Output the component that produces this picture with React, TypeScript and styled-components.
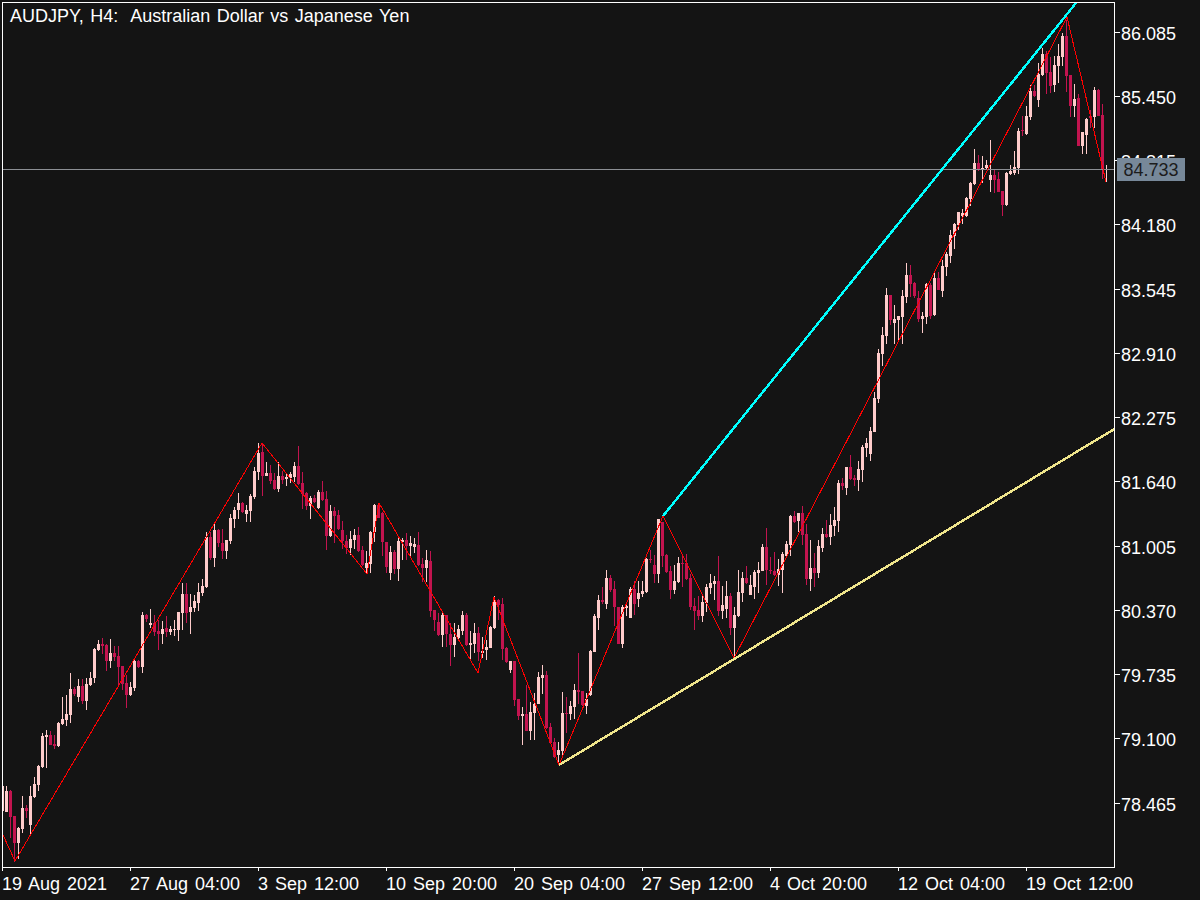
import styled, { createGlobalStyle } from 'styled-components';

// [bull, wick high, body top, body bottom, wick low], one candle every 4px starting at x=2
type Candle = [0 | 1, number, number, number, number];

const CANDLES: Candle[] = [
  [1, 786, 786, 811, 812], [1, 786, 791, 812, 812], [0, 790, 791, 817, 838], [0, 816, 816, 843, 862],
  [1, 827, 828, 843, 859], [1, 796, 808, 829, 833], [0, 805, 808, 811, 818], [1, 786, 796, 825, 835],
  [1, 777, 784, 797, 798], [1, 765, 766, 785, 791], [1, 733, 736, 767, 768], [1, 730, 735, 737, 768],
  [0, 731, 735, 745, 745], [0, 735, 744, 746, 749], [1, 722, 723, 746, 747], [1, 697, 719, 724, 725],
  [1, 695, 714, 720, 726], [1, 673, 689, 715, 723], [0, 687, 689, 694, 696], [1, 679, 686, 697, 702],
  [0, 679, 686, 701, 704], [1, 678, 684, 701, 710], [1, 672, 678, 685, 686], [1, 648, 649, 678, 683],
  [1, 640, 644, 650, 651], [0, 638, 644, 646, 654], [0, 644, 645, 661, 671], [1, 639, 653, 661, 668],
  [0, 646, 653, 657, 661], [0, 646, 656, 667, 685], [0, 666, 666, 684, 690], [0, 675, 683, 695, 708],
  [1, 682, 687, 695, 696], [1, 660, 661, 688, 691], [0, 660, 661, 667, 668], [1, 612, 615, 667, 673],
  [0, 614, 615, 619, 622], [1, 609, 623, 625, 628], [0, 615, 623, 632, 636], [0, 620, 631, 634, 650],
  [1, 621, 629, 634, 644], [0, 616, 628, 632, 637], [1, 626, 629, 632, 635], [1, 620, 629, 630, 636],
  [1, 612, 612, 630, 641], [1, 583, 594, 613, 630], [0, 583, 594, 613, 623], [1, 594, 607, 612, 634],
  [1, 595, 601, 608, 612], [1, 583, 592, 603, 611], [1, 579, 586, 593, 596], [1, 532, 537, 587, 588],
  [0, 532, 537, 558, 560], [1, 523, 530, 558, 567], [0, 529, 530, 543, 547], [0, 529, 543, 551, 559],
  [1, 540, 540, 551, 559], [1, 514, 518, 541, 544], [1, 507, 510, 519, 528], [1, 493, 503, 510, 519],
  [0, 502, 503, 512, 513], [1, 505, 510, 514, 522], [1, 494, 496, 511, 522], [1, 467, 471, 497, 499],
  [1, 443, 453, 472, 480], [0, 444, 452, 476, 496], [1, 462, 473, 476, 476], [0, 465, 473, 481, 484],
  [0, 473, 480, 489, 490], [1, 462, 476, 489, 492], [0, 471, 476, 480, 484], [1, 473, 477, 479, 486],
  [1, 472, 474, 478, 483], [1, 462, 466, 477, 482], [0, 446, 466, 484, 485], [0, 472, 483, 494, 509],
  [0, 492, 493, 506, 510], [1, 496, 498, 506, 519], [0, 495, 498, 502, 503], [1, 490, 492, 508, 509],
  [0, 481, 492, 500, 501], [0, 491, 499, 536, 550], [1, 505, 511, 536, 537], [0, 507, 511, 516, 543],
  [0, 510, 515, 529, 530], [0, 521, 530, 541, 549], [0, 535, 541, 548, 554], [1, 531, 539, 548, 555],
  [1, 529, 535, 540, 549], [0, 527, 535, 551, 552], [0, 546, 550, 565, 566], [1, 551, 563, 568, 573],
  [1, 531, 532, 564, 573], [1, 504, 505, 532, 542], [0, 504, 505, 518, 518], [0, 512, 513, 542, 556],
  [0, 542, 542, 567, 573], [1, 546, 552, 573, 580], [0, 550, 552, 569, 574], [1, 538, 541, 569, 581],
  [1, 538, 540, 542, 560], [0, 533, 540, 546, 560], [1, 536, 543, 546, 557], [1, 538, 544, 547, 553],
  [0, 532, 545, 565, 566], [0, 558, 564, 568, 582], [1, 550, 560, 568, 582], [0, 551, 561, 611, 617],
  [0, 610, 610, 620, 631], [0, 613, 622, 635, 636], [1, 613, 615, 635, 647], [0, 615, 615, 634, 647],
  [0, 623, 634, 645, 666], [1, 623, 637, 645, 657], [1, 625, 629, 638, 639], [1, 611, 615, 631, 635],
  [0, 613, 615, 645, 646], [1, 631, 643, 645, 659], [1, 623, 633, 644, 653], [0, 627, 633, 652, 661],
  [1, 637, 651, 653, 658], [1, 640, 647, 650, 660], [1, 626, 627, 648, 648], [1, 596, 600, 628, 629],
  [0, 599, 600, 605, 620], [0, 598, 604, 649, 660], [0, 647, 648, 662, 663], [1, 661, 661, 670, 673],
  [0, 661, 661, 700, 706], [0, 699, 699, 716, 720], [1, 707, 714, 716, 745], [0, 685, 714, 731, 731],
  [1, 702, 712, 731, 740], [1, 693, 704, 713, 740], [1, 672, 677, 704, 704], [1, 665, 675, 678, 694],
  [0, 671, 675, 728, 729], [0, 723, 727, 743, 744], [0, 738, 742, 757, 758], [1, 742, 750, 755, 765],
  [1, 692, 713, 751, 755], [0, 697, 713, 714, 733], [1, 701, 706, 714, 720], [1, 684, 690, 707, 719],
  [0, 653, 690, 692, 704], [0, 691, 691, 705, 706], [1, 693, 699, 706, 714], [1, 650, 651, 695, 696],
  [1, 614, 616, 652, 652], [1, 595, 600, 618, 630], [0, 587, 600, 602, 604], [1, 570, 578, 604, 609],
  [0, 575, 578, 590, 592], [0, 581, 589, 607, 626], [0, 607, 607, 644, 644], [1, 605, 607, 644, 648],
  [1, 603, 606, 608, 616], [1, 587, 589, 618, 618], [0, 581, 589, 604, 615], [1, 581, 593, 599, 607],
  [1, 581, 591, 594, 597], [1, 558, 559, 592, 593], [0, 550, 559, 560, 563], [0, 555, 565, 574, 583],
  [1, 519, 519, 574, 583], [0, 522, 522, 556, 567], [0, 554, 555, 572, 573], [0, 566, 571, 590, 599],
  [1, 565, 581, 590, 594], [1, 557, 563, 582, 583], [0, 555, 563, 564, 587], [0, 554, 563, 579, 580],
  [0, 574, 578, 607, 610], [0, 598, 606, 611, 630], [0, 596, 610, 616, 620], [1, 596, 602, 616, 622],
  [1, 584, 587, 603, 612], [1, 574, 583, 588, 594], [1, 576, 581, 584, 600], [0, 556, 581, 611, 616],
  [1, 586, 605, 611, 619], [1, 581, 596, 609, 618], [0, 593, 596, 628, 635], [1, 607, 615, 628, 658],
  [1, 570, 592, 616, 617], [1, 572, 578, 593, 602], [0, 566, 578, 583, 584], [1, 575, 585, 595, 595],
  [1, 570, 572, 587, 599], [1, 562, 570, 573, 593], [1, 544, 547, 571, 571], [0, 528, 547, 570, 585],
  [0, 557, 570, 571, 574], [0, 552, 571, 575, 576], [1, 559, 569, 575, 586], [1, 552, 554, 570, 593],
  [1, 541, 544, 556, 556], [1, 515, 516, 545, 556], [0, 511, 516, 522, 523], [1, 513, 513, 521, 532],
  [0, 506, 513, 535, 545], [0, 524, 534, 579, 585], [1, 540, 568, 579, 591], [0, 553, 568, 573, 587],
  [1, 540, 546, 573, 578], [1, 528, 534, 548, 552], [0, 520, 534, 537, 538], [1, 514, 525, 537, 545],
  [1, 507, 520, 526, 536], [1, 480, 483, 521, 532], [0, 478, 483, 486, 490], [1, 467, 467, 488, 495],
  [0, 455, 467, 479, 480], [0, 475, 478, 480, 486], [1, 461, 469, 480, 491], [1, 445, 447, 470, 482],
  [1, 438, 443, 448, 457], [1, 427, 431, 454, 461], [1, 392, 398, 432, 432], [1, 349, 353, 399, 403],
  [1, 327, 335, 354, 366], [1, 288, 295, 336, 344], [0, 295, 295, 320, 325], [1, 305, 319, 323, 344],
  [1, 316, 316, 320, 340], [1, 290, 296, 317, 344], [1, 263, 275, 297, 303], [0, 265, 275, 284, 297],
  [0, 282, 283, 296, 298], [0, 291, 298, 319, 322], [1, 312, 316, 319, 333], [1, 283, 284, 317, 324],
  [0, 283, 285, 316, 319], [1, 273, 278, 315, 316], [0, 272, 278, 290, 290], [1, 260, 266, 291, 297],
  [1, 252, 254, 267, 276], [1, 230, 235, 256, 263], [1, 223, 224, 236, 249], [1, 212, 212, 225, 230],
  [1, 209, 213, 216, 224], [1, 197, 198, 216, 217], [1, 182, 183, 199, 206], [1, 149, 163, 184, 185],
  [0, 155, 163, 170, 171], [1, 156, 168, 169, 183], [1, 160, 165, 168, 169], [1, 140, 175, 180, 192],
  [0, 169, 175, 180, 193], [0, 172, 179, 192, 192], [0, 191, 191, 205, 216], [1, 172, 173, 205, 206],
  [1, 165, 171, 174, 175], [1, 151, 167, 173, 175], [1, 128, 131, 168, 174], [0, 116, 130, 131, 136],
  [1, 106, 116, 134, 135], [1, 85, 91, 117, 120], [0, 85, 91, 96, 97], [1, 63, 74, 100, 107],
  [1, 48, 54, 75, 76], [0, 51, 54, 73, 94], [0, 57, 72, 86, 93], [1, 56, 65, 85, 92],
  [1, 44, 56, 66, 83], [1, 33, 36, 57, 66], [0, 20, 36, 76, 92], [0, 75, 75, 106, 117],
  [1, 84, 99, 106, 117], [0, 94, 98, 146, 146], [1, 132, 132, 146, 154], [1, 118, 119, 135, 154],
  [0, 110, 116, 118, 128], [1, 87, 90, 117, 128], [0, 89, 90, 116, 116], [0, 104, 115, 170, 179],
  [1, 165, 169, 170, 182],
];

const ZIGZAG = '3,835 15,861 262,443 367,574 379,503 478,673 494,597 559,765 663,516 734,658 1067,17 1106,182';
const PRICES = ['86.085', '85.450', '84.815', '84.180', '83.545', '82.910', '82.275', '81.640', '81.005', '80.370', '79.735', '79.100', '78.465'];
const TIMES = ['19 Aug 2021', '27 Aug 04:00', '3 Sep 12:00', '10 Sep 20:00', '20 Sep 04:00', '27 Sep 12:00', '4 Oct 20:00', '12 Oct 04:00', '19 Oct 12:00'];

const GlobalStyle = createGlobalStyle`
  html, body {
    margin: 0;
    background: #141414;
    overflow: hidden;
  }
`;

const Terminal = styled.div`
  width: 1200px;
  height: 900px;
  display: grid;
  grid-template-columns: 1115px 85px;
  grid-template-rows: 868px 32px;
  background: #141414;
  color: #fff;
  font-family: 'Liberation Sans', Arial, sans-serif;
  font-size: 18px;
`;

const ChartCell = styled.div`
  padding: 2px 0 0 2px;
`;

const ChartFrame = styled.div`
  position: relative;
  width: 1111px;
  height: 864px;
  border: 1px solid #fff;
  overflow: hidden;
`;

const Title = styled.div`
  position: absolute;
  top: 2px;
  left: 7px;
  line-height: 22px;
  white-space: pre;
  word-spacing: 1.5px;
`;

const Plot = styled.svg`
  display: block;
  width: 1111px;
  height: 864px;
`;

const Wick = styled.rect<{ $bull: boolean }>`
  fill: ${(p) => (p.$bull ? '#ffcccb' : '#c2144f')};
`;

const Body = styled.rect<{ $bull: boolean }>`
  fill: ${(p) => (p.$bull ? '#ffcccb' : '#c2144f')};
`;

const ZigZag = styled.polyline`
  fill: none;
  stroke: #ff0000;
  stroke-width: 1;
`;

const ChannelLine = styled.line<{ $color: string }>`
  stroke: ${(p) => p.$color};
  stroke-width: 2.4;
`;

const PriceLine = styled.line`
  stroke: #8c8f94;
  stroke-width: 1;
`;

const PriceAxis = styled.div`
  position: relative;
  padding-top: 2px;
`;

const PriceRow = styled.div`
  height: 64.25px;
  display: flex;
  align-items: center;
  gap: 1px;

  &::before {
    content: '';
    width: 5px;
    height: 1px;
    margin-top: -4px;
    background: #fff;
  }
`;

const PriceTag = styled.div`
  position: absolute;
  top: 158px;
  left: 2px;
  width: 68px;
  height: 23px;
  padding-top: 1px;
  box-sizing: border-box;
  display: flex;
  align-items: center;
  justify-content: center;
  background: #778899;
  color: #1c1c1c;
`;

const TimeAxis = styled.div`
  grid-column: 1 / -1;
  display: flex;
  padding-left: 2px;
`;

const TimeCell = styled.div`
  width: 128px;
  flex: none;
  white-space: nowrap;

  &::before {
    content: '';
    display: block;
    width: 1px;
    height: 3px;
    background: #fff;
  }
`;

const TimeLabel = styled.div`
  line-height: 22px;
  margin-top: 2px;
  word-spacing: 2px;
`;

export default function App() {
  return (
    <Terminal>
      <GlobalStyle />
      <ChartCell>
        <ChartFrame>
          <Plot viewBox="3 3 1111 864" shapeRendering="crispEdges">
            {CANDLES.map(([bull, high, top, bottom, low], i) => {
              const x = 2 + i * 4;
              return (
                <g key={x}>
                  <Wick $bull={!!bull} x={x} y={high} width={1} height={Math.max(low - high, 1)} />
                  <Body $bull={!!bull} x={x - 1} y={top} width={3} height={Math.max(bottom - top, 1)} />
                </g>
              );
            })}
            <PriceLine x1={3} y1={169.5} x2={1114} y2={169.5} />
            <ZigZag points={ZIGZAG} />
            <ChannelLine $color="#00ffff" x1={663} y1={516} x2={1080} y2={-2} />
            <ChannelLine $color="#f0e68c" x1={559} y1={765} x2={1116} y2={428} />
          </Plot>
          <Title>{'AUDJPY, H4:  Australian Dollar vs Japanese Yen'}</Title>
        </ChartFrame>
      </ChartCell>
      <PriceAxis>
        {PRICES.map((price) => (
          <PriceRow key={price}>{price}</PriceRow>
        ))}
        <PriceTag>84.733</PriceTag>
      </PriceAxis>
      <TimeAxis>
        {TIMES.map((time) => (
          <TimeCell key={time}>
            <TimeLabel>{time}</TimeLabel>
          </TimeCell>
        ))}
      </TimeAxis>
    </Terminal>
  );
}
